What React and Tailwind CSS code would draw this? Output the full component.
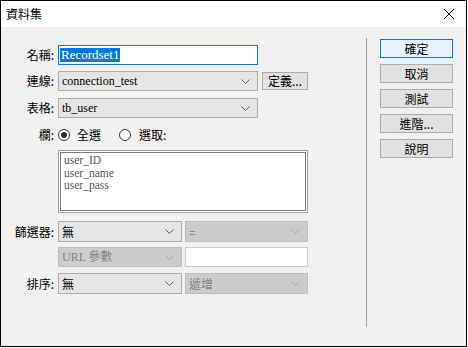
import React from 'react';

const CJK = { fontFamily: '"Noto Sans CJK TC", "Noto Sans CJK SC", sans-serif' };
const SERIF = { fontFamily: '"Liberation Serif", "Noto Sans CJK TC", serif' };

const Chevron = ({ disabled }) => (
  <svg width="9" height="5" viewBox="0 0 9 5" className="shrink-0">
    <path d="M0.5 0.5 L4.5 4.5 L8.5 0.5" fill="none" stroke={disabled ? '#a8a8a8' : '#606060'} strokeWidth="1" />
  </svg>
);

const Combo = ({ value, width, height = 20, disabled, serif, className = '' }) => (
  <div
    className={`flex items-center justify-between pl-[3px] pr-[7px] border text-[12px] ${
      disabled ? 'bg-[#cccccc] border-[#bfbfbf] text-[#838383]' : 'bg-[#e5e5e5] border-[#adadad] text-black'
    } ${className}`}
    style={{ width, height, ...(serif ? SERIF : CJK) }}
  >
    <span className="leading-none">{value}</span>
    <Chevron disabled={disabled} />
  </div>
);

const Label = ({ children }) => (
  <div className="w-[57px] pr-[4px] text-right text-[12px] leading-none shrink-0" style={CJK}>
    {children}
  </div>
);

const Radio = ({ checked }) => (
  <span className="w-[12px] h-[12px] rounded-full border border-[#333333] bg-white flex items-center justify-center shrink-0">
    {checked && <span className="w-[6px] h-[6px] rounded-full bg-[#333333]" />}
  </span>
);

const SideButton = ({ children, primary }) => (
  <button
    className={`w-[73px] h-[19px] border text-[12px] leading-none flex items-center justify-center ${
      primary ? 'bg-[#e5f1fb] border-[#0078d7]' : 'bg-[#e1e1e1] border-[#adadad]'
    }`}
    style={CJK}
  >
    {children}
  </button>
);

export default function App() {
  return (
    <div className="w-[468px] h-[348px] bg-white">
      <div className="w-[467px] h-[347px] border border-black bg-[#f0f0f0] flex flex-col">
        {/* title bar */}
        <div className="h-[26px] bg-white flex items-center justify-between pl-[5px] pr-[11px] shrink-0">
          <span className="text-[12px] text-black" style={CJK}>資料集</span>
          <svg width="12" height="12" viewBox="0 0 12 12">
            <path d="M1 1 L11 11 M11 1 L1 11" stroke="#000" strokeWidth="1" />
          </svg>
        </div>

        <div className="flex flex-1">
          {/* form */}
          <div className="w-[365px] flex flex-col pt-[18px]">
            <div className="flex items-center h-[20px]">
              <Label>名稱:</Label>
              <div className="w-[200px] h-[20px] bg-white border border-[#0078d7] flex items-center pl-[1px]">
                <span className="bg-[#0078d7] text-white text-[13px] leading-[14px] px-[1px]" style={SERIF}>
                  Recordset1
                </span>
              </div>
            </div>

            <div className="flex items-center h-[20px] mt-[6px]">
              <Label>連線:</Label>
              <Combo value="connection_test" width={200} serif />
              <button
                className="ml-[4px] w-[46px] h-[18px] bg-[#e1e1e1] border border-[#adadad] text-[12px] leading-none flex items-center justify-center"
                style={CJK}
              >
                定義...
              </button>
            </div>

            <div className="flex items-center h-[20px] mt-[7px]">
              <Label>表格:</Label>
              <Combo value="tb_user" width={200} serif />
            </div>

            <div className="flex items-center h-[14px] mt-[10px]">
              <div className="w-[53px] text-right text-[12px] leading-none" style={CJK}>欄:</div>
              <div className="ml-[4px] flex items-center gap-[7px]">
                <Radio checked />
                <span className="text-[12px] leading-none" style={CJK}>全選</span>
              </div>
              <div className="ml-[18px] flex items-center gap-[8px]">
                <Radio />
                <span className="text-[12px] leading-none" style={CJK}>選取:</span>
              </div>
            </div>

            <div className="flex mt-[8px]">
              <div className="w-[57px] shrink-0" />
              <div className="w-[250px] h-[63px] border border-[#a0a0a0] bg-white p-px">
                <div className="h-full border border-[#7a7a7a] pl-[3px] pt-[1px] flex flex-col text-[11.5px] leading-[12.5px] text-[#555555]" style={SERIF}>
                  <span>user_ID</span>
                  <span>user_name</span>
                  <span>user_pass</span>
                </div>
              </div>
            </div>

            <div className="flex items-center h-[21px] mt-[8px]">
              <Label>篩選器:</Label>
              <Combo value="無" width={124} height={21} />
              <Combo value="=" width={123} height={21} disabled className="ml-[3px]" />
            </div>

            <div className="flex items-center h-[20px] mt-[5px]">
              <div className="w-[57px] shrink-0" />
              <Combo value="URL 參數" width={124} disabled serif />
              <div className="ml-[3px] w-[123px] h-[20px] bg-white border border-[#cccccc]" />
            </div>

            <div className="flex items-center h-[21px] mt-[6px]">
              <Label>排序:</Label>
              <Combo value="無" width={124} height={21} />
              <Combo value="遞增" width={123} height={21} disabled className="ml-[3px]" />
            </div>
          </div>

          {/* divider */}
          <div className="w-px h-[289px] mt-[11px] bg-[#a0a0a0]" />

          {/* buttons */}
          <div className="flex flex-col gap-[6px] pl-[13px] pt-[12px]">
            <SideButton primary>確定</SideButton>
            <SideButton>取消</SideButton>
            <SideButton>測試</SideButton>
            <SideButton>進階...</SideButton>
            <SideButton>說明</SideButton>
          </div>
        </div>
      </div>
    </div>
  );
}
